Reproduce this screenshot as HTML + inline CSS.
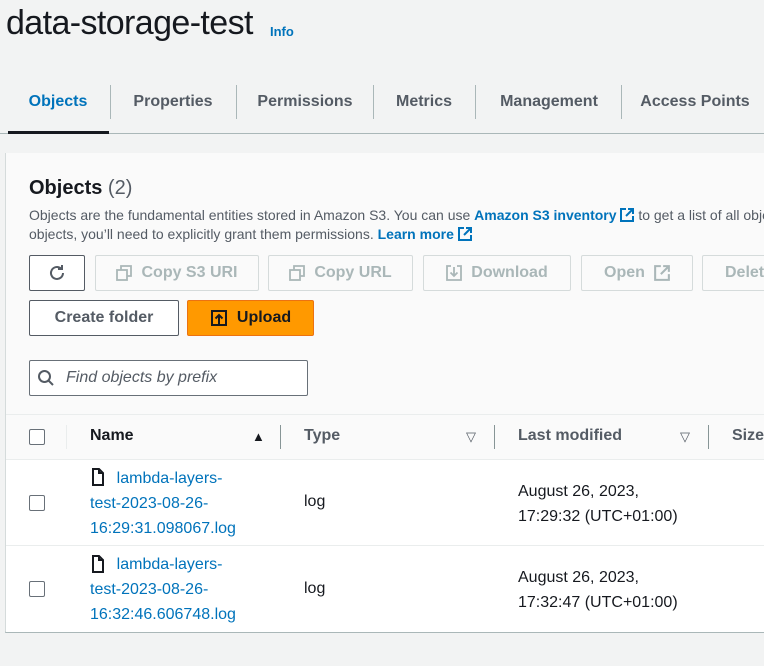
<!DOCTYPE html>
<html><head><meta charset="utf-8"><style>
*{margin:0;padding:0;box-sizing:border-box}
html,body{width:764px;height:666px;overflow:hidden}
body{background:#f2f3f3;font-family:"Liberation Sans",sans-serif;position:relative;color:#16191f}
.a{position:absolute;white-space:nowrap}
.tab{position:absolute;top:93px;font-size:16px;font-weight:bold;color:#545b64;white-space:nowrap;transform:translateX(-50%)}
.div{position:absolute;top:85px;width:1px;height:34px;background:#aab7b8}
.btn{position:absolute;height:36px;border:1px solid #d5dbdb;border-radius:2px;background:#fafafa;color:#aab7b8;font-weight:bold;font-size:16px;display:flex;align-items:center;justify-content:center;gap:9px;white-space:nowrap;overflow:hidden}
.cb{position:absolute;width:16px;height:16px;border:1.5px solid #687078;border-radius:2px;background:#fff}
.lnk{color:#0073bb}
.hd{position:absolute;top:427px;font-size:16px;font-weight:bold;color:#16191f}
.vd{position:absolute;top:425px;width:1px;height:24px;background:#879596}
</style></head><body>
<div class="a" style="left:6px;top:4px;font-size:34px;letter-spacing:-0.6px">data-storage-test</div>
<div class="a lnk" style="left:270px;top:24px;font-size:13px;font-weight:bold">Info</div>

<div class="tab" style="left:58px;color:#0073bb">Objects</div>
<div class="tab" style="left:173px">Properties</div>
<div class="tab" style="left:305px">Permissions</div>
<div class="tab" style="left:424px">Metrics</div>
<div class="tab" style="left:549px">Management</div>
<div class="tab" style="left:695px">Access Points</div>
<div class="div" style="left:110px"></div><div class="div" style="left:236px"></div><div class="div" style="left:373px"></div><div class="div" style="left:475px"></div><div class="div" style="left:621px"></div>
<div class="a" style="left:0;top:133px;width:764px;height:1px;background:#aab7b8"></div>
<div class="a" style="left:8px;top:131px;width:101px;height:3px;background:#16191f"></div>

<div class="a" style="left:5px;top:153px;width:759px;height:480px;background:#fafafa;border-left:1px solid #d5dbdb;border-bottom:2px solid #aab7b8"></div>

<div class="a" style="left:29px;top:177px;font-size:20px;font-weight:bold">Objects <span style="font-weight:normal;color:#545b64">(2)</span></div>
<div class="a" style="left:29px;top:206px;font-size:14px;line-height:19px;color:#545b64">Objects are the fundamental entities stored in Amazon S3. You can use <b class="lnk">Amazon S3 inventory <svg width="14" height="14" viewBox="0 0 14 14" fill="none" stroke="#0073bb" stroke-width="2" style="vertical-align:-2px"><path d="M6 1H1v12h12V8M8 1h5v5M13 1L6 8"/></svg></b> to get a list of all objects in your bucket.<br>objects, you’ll need to explicitly grant them permissions. <b class="lnk">Learn more <svg width="14" height="14" viewBox="0 0 14 14" fill="none" stroke="#0073bb" stroke-width="2" style="vertical-align:-2px"><path d="M6 1H1v12h12V8M8 1h5v5M13 1L6 8"/></svg></b></div>

<div class="btn" style="left:29px;top:255px;width:56px;border-color:#545b64;background:#fff"><svg width="20" height="20" viewBox="0 0 20 20" fill="none" stroke="#545b64" stroke-width="2"><path d="M16 10a6 6 0 1 1-2-4.5"/><path d="M15 2v4h-4"/></svg></div>
<div class="btn" style="left:95px;top:255px;width:164px"><svg width="16" height="16" viewBox="0 0 16 16" fill="none" stroke="#aab7b8" stroke-width="1.8"><rect x="1" y="5" width="10" height="10"/><path d="M5 5V1h10v10h-4"/></svg>Copy S3 URI</div>
<div class="btn" style="left:268px;top:255px;width:145px"><svg width="16" height="16" viewBox="0 0 16 16" fill="none" stroke="#aab7b8" stroke-width="1.8"><rect x="1" y="5" width="10" height="10"/><path d="M5 5V1h10v10h-4"/></svg>Copy URL</div>
<div class="btn" style="left:423px;top:255px;width:148px"><svg width="16" height="16" viewBox="0 0 16 16" fill="none" stroke="#aab7b8" stroke-width="1.8"><path d="M5 1H1v14h14V1h-4M8 2v9M4.5 7.5L8 11l3.5-3.5"/></svg>Download</div>
<div class="btn" style="left:581px;top:255px;width:112px">Open <svg width="16" height="16" viewBox="0 0 14 14" fill="none" stroke="#aab7b8" stroke-width="1.8"><path d="M6 1H1v12h12V8M8 1h5v5M13 1L6 8"/></svg></div>
<div class="btn" style="left:702px;top:255px;width:100px;justify-content:flex-start;padding-left:22px">Delete</div>

<div class="btn" style="left:29px;top:300px;width:150px;border-color:#545b64;color:#545b64;background:#fff">Create folder</div>
<div class="btn" style="left:187px;top:300px;width:127px;border-color:#ec7211;background:#ff9900;color:#16191f"><svg width="18" height="18" viewBox="0 0 18 18" fill="none" stroke="#16191f" stroke-width="2"><rect x="2" y="2" width="14" height="14"/><path d="M9 15V6M5.5 9.5L9 6l3.5 3.5"/></svg>Upload</div>

<div class="a" style="left:29px;top:360px;width:279px;height:36px;border:1px solid #687078;border-radius:2px;background:#fff"></div>
<svg class="a" style="left:37px;top:369px" width="18" height="18" viewBox="0 0 18 18" fill="none" stroke="#545b64" stroke-width="2"><circle cx="7.5" cy="7.5" r="5.5"/><path d="M11.5 11.5L16 16"/></svg>
<div class="a" style="left:66px;top:369px;font-size:16px;font-style:italic;color:#545b64">Find objects by prefix</div>

<div class="a" style="left:6px;top:414px;width:758px;height:1px;background:#eaeded"></div>
<div class="cb" style="left:29px;top:429px"></div>
<div class="a" style="left:66px;top:425px;width:1px;height:24px;background:#eaeded"></div>
<div class="hd" style="left:90px">Name</div><div class="a" style="left:252px;top:429px;font-size:13px">▲</div>
<div class="vd" style="left:280px"></div>
<div class="hd" style="left:304px;color:#545b64">Type</div><div class="a" style="left:466px;top:429px;font-size:13px;color:#545b64">▽</div>
<div class="vd" style="left:494px"></div>
<div class="hd" style="left:518px;color:#545b64">Last modified</div><div class="a" style="left:680px;top:429px;font-size:13px;color:#545b64">▽</div>
<div class="vd" style="left:708px"></div>
<div class="hd" style="left:732px;color:#545b64">Size</div>

<div class="a" style="left:6px;top:459px;width:758px;height:173px;background:#fff;border-top:1px solid #eaeded"></div>
<div class="a" style="left:6px;top:545px;width:758px;height:1px;background:#eaeded"></div>

<div class="cb" style="left:29px;top:495px"></div>
<svg class="a" style="left:91px;top:468px" width="14" height="18" viewBox="0 0 14 18" fill="none" stroke="#16191f" stroke-width="2"><path d="M2 1h6l4 4v12H2z"/><path d="M8 1v4h4"/></svg>
<div class="a lnk" style="left:90px;top:466px;font-size:16px;line-height:25px">&nbsp;&nbsp;&nbsp;&nbsp;&nbsp;&nbsp;lambda-layers-<br>test-2023-08-26-<br>16:29:31.098067.log</div>
<div class="a" style="left:304px;top:493px;font-size:16px">log</div>
<div class="a" style="left:518px;top:479px;font-size:16px;line-height:25px">August 26, 2023,<br>17:29:32 (UTC+01:00)</div>

<div class="cb" style="left:29px;top:581px"></div>
<svg class="a" style="left:91px;top:555px" width="14" height="18" viewBox="0 0 14 18" fill="none" stroke="#16191f" stroke-width="2"><path d="M2 1h6l4 4v12H2z"/><path d="M8 1v4h4"/></svg>
<div class="a lnk" style="left:90px;top:552px;font-size:16px;line-height:25px">&nbsp;&nbsp;&nbsp;&nbsp;&nbsp;&nbsp;lambda-layers-<br>test-2023-08-26-<br>16:32:46.606748.log</div>
<div class="a" style="left:304px;top:580px;font-size:16px">log</div>
<div class="a" style="left:518px;top:565px;font-size:16px;line-height:25px">August 26, 2023,<br>17:32:47 (UTC+01:00)</div>
</body></html>
